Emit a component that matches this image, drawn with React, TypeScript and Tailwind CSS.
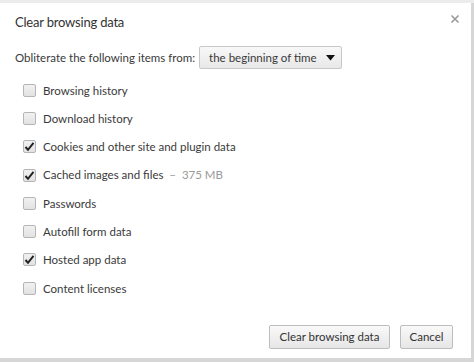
const items = [
  { label: 'Browsing history', checked: false },
  { label: 'Download history', checked: false },
  { label: 'Cookies and other site and plugin data', checked: true },
  { label: 'Cached images and files', checked: true, extra: '375 MB' },
  { label: 'Passwords', checked: false },
  { label: 'Autofill form data', checked: false },
  { label: 'Hosted app data', checked: true },
  { label: 'Content licenses', checked: false },
]

function Box({ checked }: { checked: boolean }) {
  return (
    <span className="w-[13px] h-[13px] border border-[#b5b5b5] rounded-[2px] bg-gradient-to-b from-[#f1f1f1] to-[#e2e2e2] flex items-center justify-center">
      {checked && (
        <svg width="11" height="11" viewBox="0 0 11 11">
          <path d="M1.5 6 L4 8.8 L9.5 1.8" fill="none" stroke="#222" strokeWidth="2" />
        </svg>
      )}
    </span>
  )
}

export default function App() {
  return (
    <div className="w-[474px] h-[362px] bg-[#d6d6d6] font-['Lato',sans-serif] text-[#3a3a3a] overflow-hidden">
      <div className="h-[3px] bg-[#ececec]" />
      <div className="w-[471px] h-[355px] bg-white flex flex-col">
        <div className="flex items-start justify-between pl-[15px] pr-[11px] pt-[9px]">
          <h1 className="text-[13px] leading-[20px] tracking-[-0.2px] text-[#333]">Clear browsing data</h1>
          <svg width="10" height="10" viewBox="0 0 10 10" className="mt-[2px]">
            <path d="M1.5 1.5 L8.5 8.5 M8.5 1.5 L1.5 8.5" stroke="#999" strokeWidth="1.6" />
          </svg>
        </div>

        <div className="flex items-center pl-[15px] mt-[14px] text-[11.5px] whitespace-nowrap">
          <span>Obliterate the following items from:</span>
          <div className="ml-[4px] h-[23px] w-[143px] border border-[#c8c8c8] rounded-[2px] bg-gradient-to-b from-[#f8f8f8] to-[#e8e8e8] flex items-center justify-between pl-[9px] pr-[6px]">
            <span>the beginning of time</span>
            <svg width="9" height="6" viewBox="0 0 9 6">
              <path d="M0 0 L9 0 L4.5 5.5 Z" fill="#111" />
            </svg>
          </div>
        </div>

        <div className="flex flex-col pl-[23px] mt-[7px] text-[11.5px]">
          {items.map((it) => (
            <div key={it.label} className="flex items-center h-[28.3px] gap-[7px]">
              <Box checked={it.checked} />
              <span>
                {it.label}
                {it.extra && <span className="text-[#999]"> &nbsp;–&nbsp; {it.extra}</span>}
              </span>
            </div>
          ))}
        </div>

        <div className="flex justify-end gap-[10px] pr-[18px] mt-auto mb-[9px] text-[11.5px]">
          <button className="h-[24px] w-[121px] border border-[#bdbdbd] rounded-[2px] bg-gradient-to-b from-[#f9f9f9] to-[#e6e6e6] text-[#333]">
            Clear browsing data
          </button>
          <button className="h-[24px] w-[53px] border border-[#bdbdbd] rounded-[2px] bg-gradient-to-b from-[#f9f9f9] to-[#e6e6e6] text-[#333]">
            Cancel
          </button>
        </div>
      </div>
    </div>
  )
}
